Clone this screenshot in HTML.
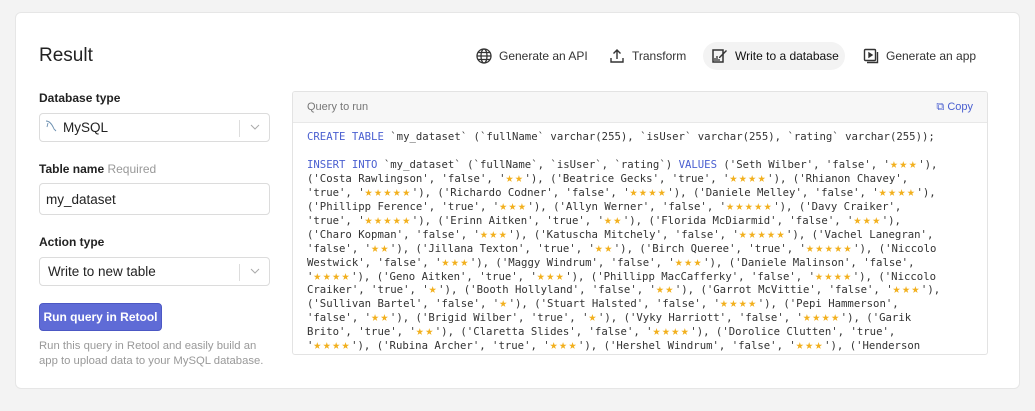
<!DOCTYPE html>
<html><head><meta charset="utf-8"><style>
*{box-sizing:border-box;margin:0;padding:0}
body{width:1035px;height:411px;background:#f3f3f3;font-family:"Liberation Sans",sans-serif;color:#1f1f1f;position:relative;overflow:hidden}
.card{position:absolute;left:15px;top:12px;width:1005px;height:377px;background:#fff;border:1px solid #e6e6e6;border-radius:6px}
.abs{position:absolute}
h1{position:absolute;left:39px;top:45px;font-size:19px;font-weight:normal;color:#222}
.lbl{position:absolute;left:39px;font-size:12px;font-weight:bold;color:#222}
.box{position:absolute;left:39px;width:231px;border:1px solid #dcdcdc;border-radius:4px;font-size:13.5px;color:#222}
.sep{position:absolute;right:29px;top:6px;width:1px;height:17px;background:#ddd}
.chev{position:absolute;right:9px;top:8px}
.btn{position:absolute;left:39px;top:303px;width:123px;height:28px;background:#5f6bd6;border:1px solid #4c58c4;border-radius:4px;color:#fff;font-size:12px;font-weight:bold;text-align:center;line-height:26px}
.help{position:absolute;left:39px;top:339px;font-size:11.3px;color:#999;line-height:14.5px}
.tab{position:absolute;top:42px;height:28px;font-size:12px;color:#333;line-height:28px;display:flex;align-items:center;gap:7px}
.qbox{position:absolute;left:292px;top:91px;width:696px;height:264px;border:1px solid #e3e3e3;border-radius:3px;overflow:hidden}
.qh{height:31px;background:#f7f7f7;border-bottom:1px solid #e8e8e8;font-size:11px;color:#777;padding:9px 0 0 14px;position:relative}
.copy{position:absolute;right:14px;top:9px;color:#4a5fd0;font-size:11px}
pre{font-family:"DejaVu Sans Mono","Liberation Mono",monospace;font-size:10.65px;line-height:13.95px;color:#333;padding:7px 0 0 14px}
.k{color:#4a5fd0}
.s{color:#f2b01e;letter-spacing:1.6px;font-size:13px;line-height:0}
</style></head><body>
<div class="card"></div>
<h1>Result</h1>
<div class="lbl" style="top:91px">Database type</div>
<div class="box" style="top:113px;height:29px">
 <svg class="abs" style="left:5px;top:6px" width="12" height="12" viewBox="0 0 12 12"><path d="M1 1c3 0 6 3 8 8l2 2M3 3l-1 4" stroke="#6b8fb0" fill="none" stroke-width="0.9"/></svg>
 <span class="abs" style="left:23px;top:6px">MySQL</span><div class="sep"></div>
 <svg class="chev" width="10" height="10" viewBox="0 0 10 10"><path d="M1 3l4 4 4-4" stroke="#aaa" fill="none"/></svg></div>
<div class="lbl" style="top:162px">Table name <span style="color:#999;font-weight:normal">Required</span></div>
<div class="box" style="top:183px;height:32px"><span class="abs" style="left:6px;top:8px">my_dataset</span></div>
<div class="lbl" style="top:235px">Action type</div>
<div class="box" style="top:257px;height:29px"><span class="abs" style="left:8px;top:6px">Write to new table</span><div class="sep"></div>
 <svg class="chev" width="10" height="10" viewBox="0 0 10 10"><path d="M1 3l4 4 4-4" stroke="#aaa" fill="none"/></svg></div>
<div class="btn">Run query in Retool</div>
<div class="help">Run this query in Retool and easily build an<br>app to upload data to your MySQL database.</div>

<div class="tab" style="left:476px"><svg width="16" height="16" viewBox="0 0 16 16" fill="none" stroke="#333" stroke-width="1.3"><circle cx="8" cy="8" r="7"/><ellipse cx="8" cy="8" rx="3" ry="7"/><path d="M1 8h14M2 4.5h12M2 11.5h12"/></svg>Generate an API</div>
<div class="tab" style="left:609px"><svg width="16" height="16" viewBox="0 0 16 16" fill="none" stroke="#333" stroke-width="1.4"><path d="M8 11V2M4.5 5.5L8 2l3.5 3.5M2 10v4h12v-4"/></svg>Transform</div>
<div class="abs" style="left:703px;top:42px;width:142px;height:28px;background:#f3f3f3;border-radius:14px"></div>
<div class="tab" style="left:712px;color:#111"><svg width="16" height="16" viewBox="0 0 16 16"><rect x="1" y="2" width="10" height="12" fill="none" stroke="#333" stroke-width="1.5"/><path d="M3 10v3M5 8v5M7 11v2" stroke="#333" stroke-width="1.3"/><path d="M7 9l7-7 1 1-7 7H7z" fill="#333"/></svg>Write to a database</div>
<div class="tab" style="left:863px"><svg width="16" height="16" viewBox="0 0 16 16" fill="none" stroke="#333" stroke-width="1.4"><rect x="1.5" y="1.5" width="11" height="11" rx="1"/><path d="M6 5v4l3-2z" fill="#333"/><path d="M4 14.5h10.5V4"/></svg>Generate an app</div>

<div class="qbox"><div class="qh">Query to run<span class="copy">⧉ Copy</span></div>
<pre><span class="k">CREATE TABLE</span> `my_dataset` (`fullName` varchar(255), `isUser` varchar(255), `rating` varchar(255));

<span class="k">INSERT INTO</span> `my_dataset` (`fullName`, `isUser`, `rating`) <span class="k">VALUES</span> ('Seth Wilber', 'false', '<span class="s">★★★</span>'),
('Costa Rawlingson', 'false', '<span class="s">★★</span>'), ('Beatrice Gecks', 'true', '<span class="s">★★★★</span>'), ('Rhianon Chavey',
'true', '<span class="s">★★★★★</span>'), ('Richardo Codner', 'false', '<span class="s">★★★★</span>'), ('Daniele Melley', 'false', '<span class="s">★★★★</span>'),
('Phillipp Ference', 'true', '<span class="s">★★★</span>'), ('Allyn Werner', 'false', '<span class="s">★★★★★</span>'), ('Davy Craiker',
'true', '<span class="s">★★★★★</span>'), ('Erinn Aitken', 'true', '<span class="s">★★</span>'), ('Florida McDiarmid', 'false', '<span class="s">★★★</span>'),
('Charo Kopman', 'false', '<span class="s">★★★</span>'), ('Katuscha Mitchely', 'false', '<span class="s">★★★★★</span>'), ('Vachel Lanegran',
'false', '<span class="s">★★</span>'), ('Jillana Texton', 'true', '<span class="s">★★</span>'), ('Birch Queree', 'true', '<span class="s">★★★★★</span>'), ('Niccolo
Westwick', 'false', '<span class="s">★★★</span>'), ('Maggy Windrum', 'false', '<span class="s">★★★</span>'), ('Daniele Malinson', 'false',
'<span class="s">★★★★</span>'), ('Geno Aitken', 'true', '<span class="s">★★★</span>'), ('Phillipp MacCafferky', 'false', '<span class="s">★★★★</span>'), ('Niccolo
Craiker', 'true', '<span class="s">★</span>'), ('Booth Hollyland', 'false', '<span class="s">★★</span>'), ('Garrot McVittie', 'false', '<span class="s">★★★</span>'),
('Sullivan Bartel', 'false', '<span class="s">★</span>'), ('Stuart Halsted', 'false', '<span class="s">★★★★</span>'), ('Pepi Hammerson',
'false', '<span class="s">★★</span>'), ('Brigid Wilber', 'true', '<span class="s">★</span>'), ('Vyky Harriott', 'false', '<span class="s">★★★★</span>'), ('Garik
Brito', 'true', '<span class="s">★★</span>'), ('Claretta Slides', 'false', '<span class="s">★★★★</span>'), ('Dorolice Clutten', 'true',
'<span class="s">★★★★</span>'), ('Rubina Archer', 'true', '<span class="s">★★★</span>'), ('Hershel Windrum', 'false', '<span class="s">★★★</span>'), ('Henderson</pre></div>
</body></html>
